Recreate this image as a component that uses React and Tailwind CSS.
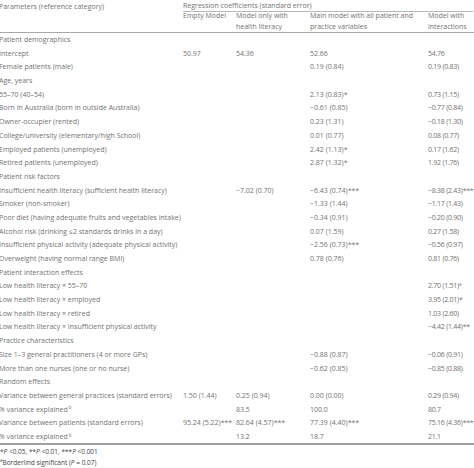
const rows = [
  { label: "Patient demographics" },
  { label: "Intercept", v: ["50.97", "54.36", "52.66", "54.76"] },
  { label: "Female patients (male)", v: ["", "", "0.19 (0.84)", "0.19 (0.83)"] },
  { label: "Age, years" },
  { label: "55–70 (40–54)", v: ["", "", "2.13 (0.83)*", "0.73 (1.15)"] },
  { label: "Born in Australia (born in outside Australia)", v: ["", "", "−0.61 (0.85)", "−0.77 (0.84)"] },
  { label: "Owner-occupier (rented)", v: ["", "", "0.23 (1.31)", "−0.18 (1.30)"] },
  { label: "College/university (elementary/high School)", v: ["", "", "0.01 (0.77)", "0.08 (0.77)"] },
  { label: "Employed patients (unemployed)", v: ["", "", "2.42 (1.13)*", "0.17 (1.62)"] },
  { label: "Retired patients (unemployed)", v: ["", "", "2.87 (1.32)*", "1.92 (1.76)"] },
  { label: "Patient risk factors" },
  { label: "Insufficient health literacy (sufficient health literacy)", v: ["", "−7.02 (0.70)", "−6.43 (0.74)***", "−8.38 (2.43)***"] },
  { label: "Smoker (non-smoker)", v: ["", "", "−1.33 (1.44)", "−1.17 (1.43)"] },
  { label: "Poor diet (having adequate fruits and vegetables intake)", v: ["", "", "−0.34 (0.91)", "−0.20 (0.90)"] },
  { label: "Alcohol risk (drinking ≤2 standards drinks in a day)", v: ["", "", "0.07 (1.59)", "0.27 (1.58)"] },
  { label: "Insufficient physical activity (adequate physical activity)", v: ["", "", "−2.56 (0.73)***", "−0.56 (0.97)"] },
  { label: "Overweight (having normal range BMI)", v: ["", "", "0.78 (0.76)", "0.81 (0.76)"] },
  { label: "Patient interaction effects" },
  { label: "Low health literacy × 55–70", v: ["", "", "", "2.70 (1.51)"], sup4: "a" },
  { label: "Low health literacy × employed", v: ["", "", "", "3.95 (2.01)*"] },
  { label: "Low health literacy × retired", v: ["", "", "", "1.03 (2.60)"] },
  { label: "Low health literacy × Insufficient physical activity", v: ["", "", "", "−4.42 (1.44)**"] },
  { label: "Practice characteristics" },
  { label: "Size 1–3 general practitioners (4 or more GPs)", v: ["", "", "−0.88 (0.87)", "−0.06 (0.91)"] },
  { label: "More than one nurses (one or no nurse)", v: ["", "", "−0.62 (0.85)", "−0.85 (0.88)"] },
  { label: "Random effects" },
  { label: "Variance between general practices (standard errors)", v: ["1.50 (1.44)", "0.25 (0.94)", "0.00 (0.00)", "0.29 (0.94)"] },
  { label: "% variance explained", sup: "b", v: ["", "83.5", "100.0", "80.7"] },
  { label: "Variance between patients (standard errors)", v: ["95.24 (5.22)***", "82.64 (4.57)***", "77.39 (4.40)***", "75.16 (4.36)***"] },
  { label: "% variance explained", sup: "b", v: ["", "13.2", "18.7", "21.1"] },
]

const cols = "grid grid-cols-[184px_53px_74px_118px_45px]"

export default function App() {
  return (
    <div className="w-[474px] h-[468px] overflow-hidden bg-white text-[#737373] text-[7px] whitespace-nowrap" style={{ fontFamily: '"Open Sans", "Noto Sans", sans-serif' }}>
      <div className="-ml-px">
        {/* header */}
        <div className={cols + " h-[9px]"}>
          <div className="flex items-end leading-[11px]">Parameters (reference category)</div>
          <div className="col-span-4 flex items-end leading-[11px] border-b border-[#b8b8b8]">Regression coefficients (standard error)</div>
        </div>
        <div className={cols + " pt-[1px] h-[24px] leading-[11px] border-b border-[#a8a8a8]"}>
          <div></div>
          <div>Empty Model</div>
          <div>Model only with<br />health literacy</div>
          <div>Main model with all patient and<br />practice variables</div>
          <div>Model with<br />interactions</div>
        </div>

        {/* body */}
        {rows.map((r, i) => (
          <div key={i} className={cols + " h-[13.7px] leading-[13.7px]"}>
            <div>
              {r.label}
              {r.sup && <sup className="text-[4.5px] ml-px">{r.sup}</sup>}
            </div>
            {(r.v || ["", "", "", ""]).map((c, j) => (
              <div key={j} className={j === 3 ? "tracking-[-0.25px]" : ""}>
                {c}
                {j === 3 && r.sup4 && <sup className="text-[4.5px]">{r.sup4}</sup>}
              </div>
            ))}
          </div>
        ))}
        <div className="border-b-2 border-[#a0a0a0] mt-[-1px]"></div>

        {/* footnotes */}
        <div className="text-[#444] text-[6.5px] leading-[11px] pt-[1px] pl-px">
          <div>*<i>P</i> &lt;0.05, **<i>P</i> &lt;0.01, ***<i>P</i> &lt;0.001</div>
          <div><sup className="text-[4.5px]">a</sup>Borderlind significant (<i>P</i> = 0.07)</div>
        </div>
      </div>
    </div>
  )
}
